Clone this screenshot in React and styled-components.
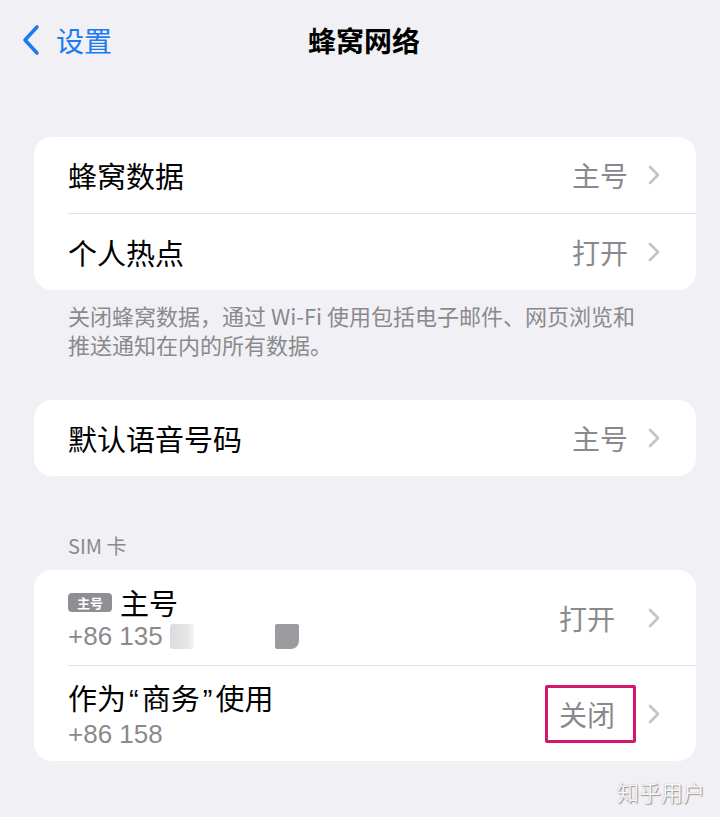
import React from "react";
import styled, { createGlobalStyle } from "styled-components";

const Global = createGlobalStyle`
  html, body { margin: 0; padding: 0; background: #f1f0f5; }
  body {
    font-family: "Noto Sans CJK SC", "Noto Sans", "Liberation Sans", sans-serif;
    -webkit-font-smoothing: antialiased;
  }
`;

const Page = styled.div`
  position: relative;
  width: 720px;
  height: 817px;
  overflow: hidden;
  background: #f1f0f5;
`;

const NavBar = styled.div`
  position: relative;
  height: 80px;
  display: flex;
  align-items: center;
  justify-content: center;
`;

const Back = styled.div`
  position: absolute;
  left: 22px;
  top: 24px;
  display: flex;
  align-items: center;
  gap: 16px;
  color: #1a7cf0;
  font-size: 28px;
  line-height: 32px;
`;

const Title = styled.div`
  font-size: 28px;
  font-weight: 700;
  color: #000;
  line-height: 32px;
  margin-left: 8px;
`;

const Section = styled.div`
  margin: ${(p) => p.$top}px 24px 0 34px;
`;

const Card = styled.div`
  background: #fff;
  border-radius: 18px;
  overflow: hidden;
`;

const Divided = styled.div`
  & + & {
    margin-left: 34px;
    border-top: 1.5px solid #e2e2e6;
  }
  & + & > div {
    padding-left: 0;
  }
`;

const Row = styled.div`
  height: ${(p) => p.$h}px;
  display: flex;
  align-items: center;
  padding: 0 36px 0 34px;
`;

const Main = styled.div`
  flex: 1;
  display: flex;
  flex-direction: column;
  min-width: 0;
`;

const Label = styled.div`
  font-size: 29px;
  line-height: 36px;
  color: #000;
  display: flex;
  align-items: center;
  gap: 8px;
`;

const Quote = styled.span`
  font-family: "Liberation Sans", sans-serif;
  padding: 0 3px;
`;

const Sub = styled.div`
  font-family: "Liberation Sans", "Noto Sans CJK SC", sans-serif;
  font-size: 26px;
  line-height: 30px;
  color: #8a8a8e;
  display: flex;
  align-items: center;
  margin-top: 1px;
`;

const Badge = styled.span`
  display: inline-flex;
  align-items: center;
  justify-content: center;
  width: 44px;
  height: 19px;
  border-radius: 4px;
  background: #8e8e93;
  color: #fff;
  font-size: 13px;
  font-weight: 700;
  line-height: 1;
`;

const Mask = styled.span`
  display: inline-block;
  height: 25px;
  width: 24px;
  margin-left: ${(p) => p.$ml}px;
  background: ${(p) => p.$bg};
  border-radius: ${(p) => (p.$dark ? "2px 2px 8px 2px" : "3px")};
`;

const Value = styled.div`
  font-size: 28px;
  line-height: 34px;
  color: #8a8a8e;
  margin-right: 20px;
`;

const BoxValue = styled.div`
  font-size: 28px;
  line-height: 34px;
  color: #8a8a8e;
  padding: 9px 18px 9px 11px;
  border: 3px solid ${(p) => (p.$marked ? "#d4166f" : "transparent")};
  border-radius: 2px;
  margin-right: 12px;
`;

const Footer = styled.div`
  padding: 11px 20px 0 68px;
  font-size: 22px;
  line-height: 29px;
  color: #8a8a8e;
`;

const Header = styled.div`
  padding: 0 0 10px 34px;
  font-size: 20px;
  line-height: 28px;
  color: #8a8a8e;
`;

const Watermark = styled.div`
  position: absolute;
  right: 15px;
  bottom: 10px;
  font-size: 22px;
  color: #f7f7f7;
  text-shadow: 1px 1px 1px rgba(0, 0, 0, 0.35), 0 0 1px rgba(0, 0, 0, 0.3);
`;

const Chevron = () => (
  <svg width="12" height="20" viewBox="0 0 12 20">
    <polyline
      points="2,2 10,10 2,18"
      fill="none"
      stroke="#c4c4c8"
      strokeWidth="2.6"
      strokeLinecap="round"
      strokeLinejoin="round"
    />
  </svg>
);

const BackArrow = () => (
  <svg width="18" height="32" viewBox="0 0 18 32">
    <polyline
      points="15,3 3,16 15,29"
      fill="none"
      stroke="#1a7cf0"
      strokeWidth="3.6"
      strokeLinecap="round"
      strokeLinejoin="round"
    />
  </svg>
);

const SimpleRow = ({ label, value }) => (
  <Divided>
    <Row $h={76}>
      <Main>
        <Label>{label}</Label>
      </Main>
      <Value>{value}</Value>
      <Chevron />
    </Row>
  </Divided>
);

export default function App() {
  return (
    <Page>
      <Global />
      <NavBar>
        <Back>
          <BackArrow />
          <span>设置</span>
        </Back>
        <Title>蜂窝网络</Title>
      </NavBar>

      <Section $top={57}>
        <Card>
          <SimpleRow label="蜂窝数据" value="主号" />
          <SimpleRow label="个人热点" value="打开" />
        </Card>
      </Section>
      <Footer>
        关闭蜂窝数据，通过 Wi-Fi 使用包括电子邮件、网页浏览和
        <br />
        推送通知在内的所有数据。
      </Footer>

      <Section $top={41}>
        <Card>
          <SimpleRow label="默认语音号码" value="主号" />
        </Card>
      </Section>

      <Section $top={56}>
        <Header>SIM 卡</Header>
      </Section>
      <Section $top={0}>
        <Card>
          <Divided>
            <Row $h={95}>
              <Main>
                <Label>
                  <Badge>主号</Badge>
                  主号
                </Label>
                <Sub>
                  +86 135
                  <Mask $ml={7} $bg="linear-gradient(90deg,#dcdcde,#e6e6e8 70%,#f4f4f5)" />
                  <Mask $ml={81} $bg="#9c9ca0" $dark />
                </Sub>
              </Main>
              <BoxValue>打开</BoxValue>
              <Chevron />
            </Row>
          </Divided>
          <Divided>
            <Row $h={95}>
              <Main>
                <Label>
                  <span>
                    作为<Quote>“</Quote>商务<Quote>”</Quote>使用
                  </span>
                </Label>
                <Sub>+86 158</Sub>
              </Main>
              <BoxValue $marked>关闭</BoxValue>
              <Chevron />
            </Row>
          </Divided>
        </Card>
      </Section>

      <Watermark>知乎用户</Watermark>
    </Page>
  );
}
